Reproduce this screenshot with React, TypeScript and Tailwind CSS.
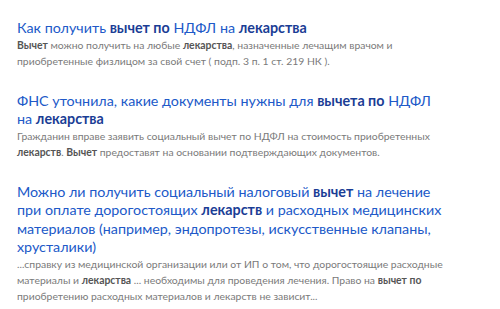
import React from 'react';

type Part = { t: string; b?: boolean };

const items: { title: Part[]; text: Part[] }[] = [
    {
        title: [
            { t: 'Как получить ' },
            { t: 'вычет по', b: true },
            { t: ' НДФЛ на ' },
            { t: 'лекарства', b: true },
        ],
        text: [
            { t: 'Вычет', b: true },
            { t: ' можно получить на любые ' },
            { t: 'лекарства', b: true },
            { t: ', назначенные лечащим врачом и приобретенные физлицом за свой счет ( подп. 3 п. 1 ст. 219 НК ).' },
        ],
    },
    {
        title: [
            { t: 'ФНС уточнила, какие документы нужны для ' },
            { t: 'вычета по', b: true },
            { t: ' НДФЛ на ' },
            { t: 'лекарства', b: true },
        ],
        text: [
            { t: 'Гражданин вправе заявить социальный вычет по НДФЛ на стоимость приобретенных ' },
            { t: 'лекарств', b: true },
            { t: '. ' },
            { t: 'Вычет', b: true },
            { t: ' предоставят на основании подтверждающих документов.' },
        ],
    },
    {
        title: [
            { t: 'Можно ли получить социальный налоговый ' },
            { t: 'вычет', b: true },
            { t: ' на лечение при оплате дорогостоящих ' },
            { t: 'лекарств', b: true },
            { t: ' и расходных медицинских материалов (например, эндопротезы, искусственные клапаны, хрусталики)' },
        ],
        text: [
            { t: '...справку из медицинской организации или от ИП о том, что дорогостоящие расходные материалы и ' },
            { t: 'лекарства', b: true },
            { t: ' ... необходимы для проведения лечения. Право на ' },
            { t: 'вычет по', b: true },
            { t: ' приобретению расходных материалов и лекарств не зависит...' },
        ],
    },
];

export default function App() {
    return (
        <div className="w-[500px] h-[309px] bg-white overflow-hidden px-[17px] pt-[19px] font-['Lato',sans-serif]">
            <div className="flex flex-col gap-[23px] w-[432px]">
                {items.map((item, i) => (
                    <div key={i}>
                        <h3 className="text-[14.3px] leading-[18.5px] text-[#2059c8]">
                            {item.title.map((p, j) =>
                                p.b ? (
                                    <b key={j} className="font-bold text-[#1a3d95]">{p.t}</b>
                                ) : (
                                    <span key={j}>{p.t}</span>
                                )
                            )}
                        </h3>
                        <p className="text-[10.4px] leading-[16px] text-[#7a7a7a] -mt-[1px]">
                            {item.text.map((p, j) =>
                                p.b ? (
                                    <b key={j} className="font-bold text-[#555]">{p.t}</b>
                                ) : (
                                    <span key={j}>{p.t}</span>
                                )
                            )}
                        </p>
                    </div>
                ))}
            </div>
        </div>
    );
}
